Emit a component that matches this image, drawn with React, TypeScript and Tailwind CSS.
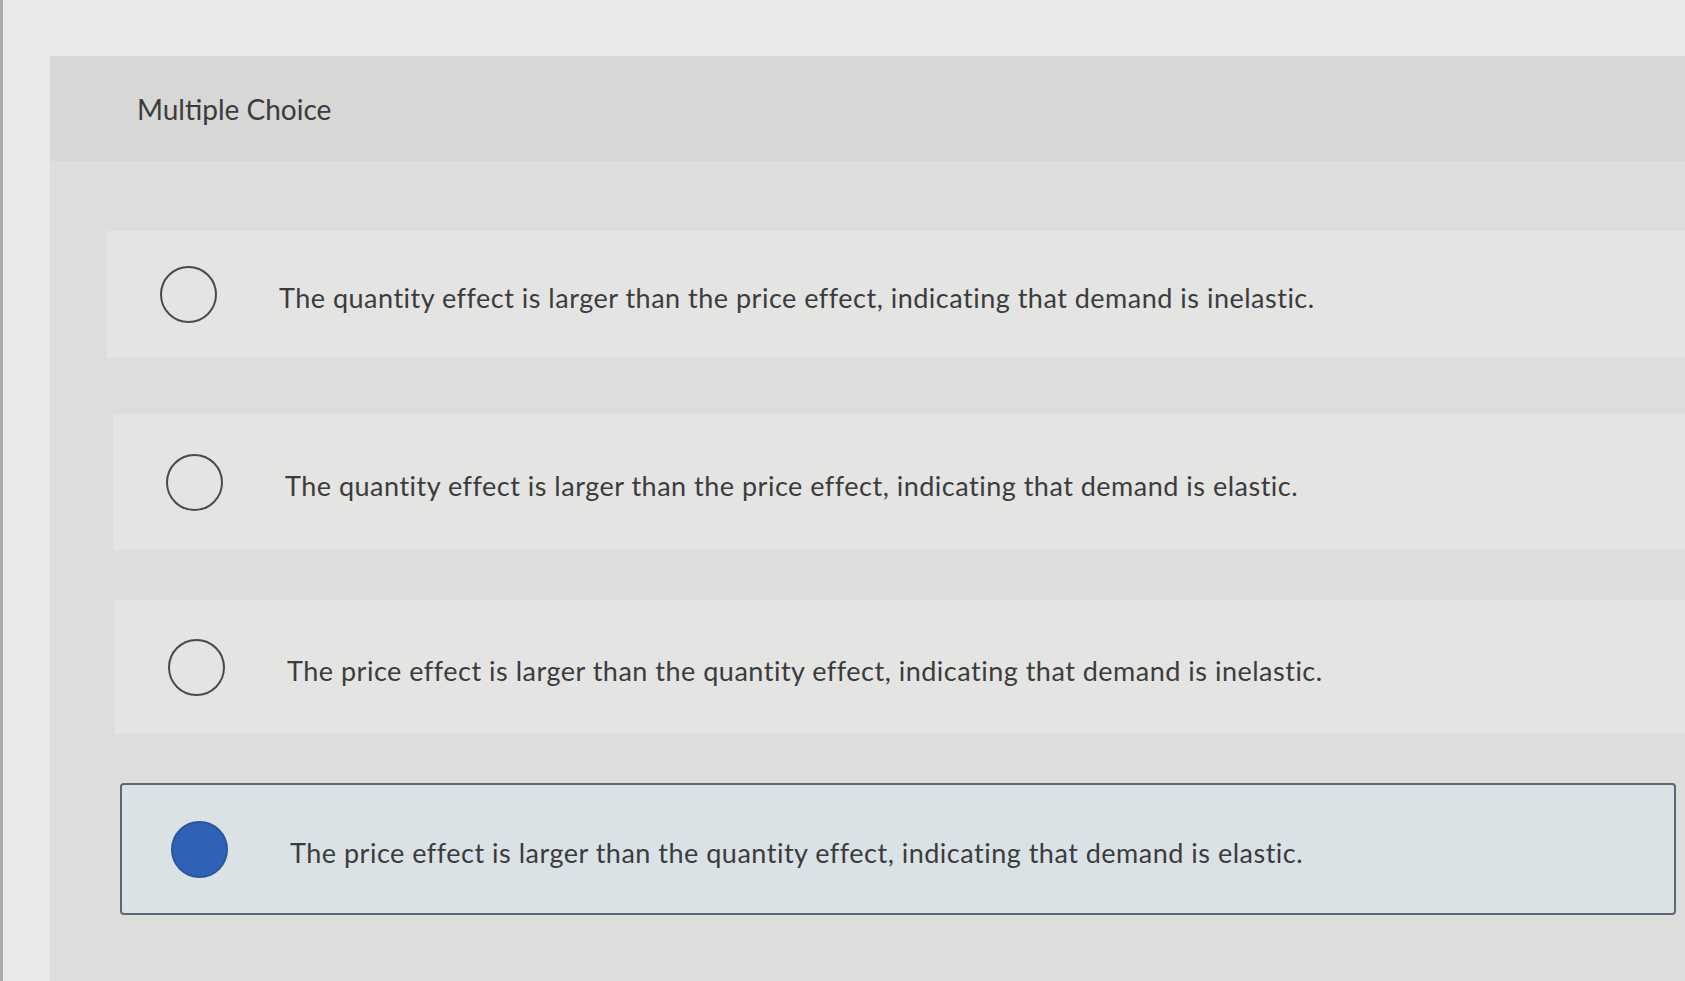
import { useState } from "react"

type Choice = {
  text: string
  offset: string
  height: string
  gap: string
}

const choices: Choice[] = [
  {
    text: "The quantity effect is larger than the price effect, indicating that demand is inelastic.",
    offset: "ml-[57px]",
    height: "h-[127px]",
    gap: "mt-[70px]",
  },
  {
    text: "The quantity effect is larger than the price effect, indicating that demand is elastic.",
    offset: "ml-[63px]",
    height: "h-[136px]",
    gap: "mt-[56px]",
  },
  {
    text: "The price effect is larger than the quantity effect, indicating that demand is inelastic.",
    offset: "ml-[65px]",
    height: "h-[134px]",
    gap: "mt-[50px]",
  },
  {
    text: "The price effect is larger than the quantity effect, indicating that demand is elastic.",
    offset: "ml-[70px]",
    height: "h-[132px]",
    gap: "mt-[49px]",
  },
]

function Radio({ checked }: { checked: boolean }) {
  if (checked) {
    return <span className="block size-[57px] shrink-0 rounded-full border-2 border-[#2a559f] bg-[#2f61b6]" />
  }

  return <span className="block size-[57px] shrink-0 rounded-full border-[2.5px] border-[#474a4f]" />
}

export default function App() {
  const [selected, setSelected] = useState(3)

  return (
    <div className="flex min-h-[981px] flex-col overflow-hidden border-l-[3px] border-[#a9a9a7] bg-[#e9e9e7] pl-[47px] pt-[56px] font-['Lato','Liberation_Sans',sans-serif] text-[#3b3c3e]">
      <div className="flex flex-1 flex-col bg-[#dddddb]">
        <div className="flex h-[105px] items-center bg-[#d7d7d5] pl-[87px]">
          <h1 className="text-[28px] leading-none">Multiple Choice</h1>
        </div>

        <div className="flex flex-col pb-[66px]">
          {choices.map((choice, index) => {
            const isSelected = selected === index
            return (
              <button
                key={choice.text}
                type="button"
                onClick={() => setSelected(index)}
                className={`${choice.gap} ${choice.offset} ${choice.height} flex items-center text-left ${
                  isSelected
                    ? "mr-[9px] rounded-[4px] border-2 border-[#5b6676] bg-[#dae2e6] pl-[49px]"
                    : "bg-[#e4e4e2] pl-[53px]"
                }`}
              >
                <Radio checked={isSelected} />
                <span className="ml-[62px] pt-[6px] text-[27px] leading-none tracking-[0.5px]">{choice.text}</span>
              </button>
            )
          })}
        </div>
      </div>
    </div>
  )
}
